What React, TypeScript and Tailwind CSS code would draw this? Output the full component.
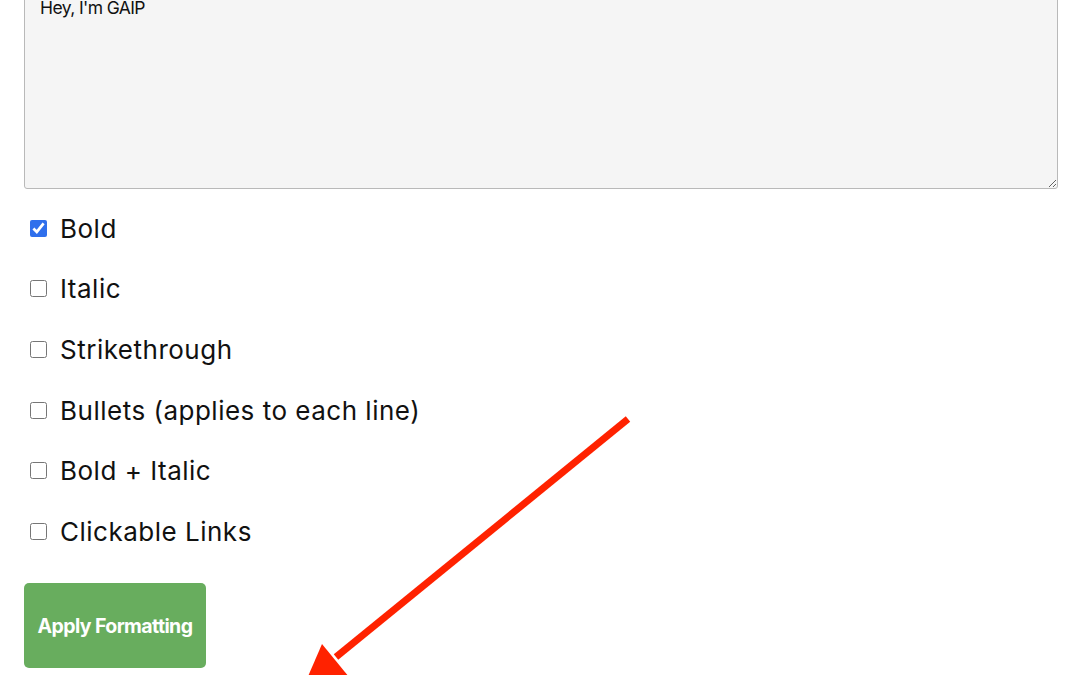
import React, { useState } from "react";

const options = [
  "Bold",
  "Italic",
  "Strikethrough",
  "Bullets (applies to each line)",
  "Bold + Italic",
  "Clickable Links",
];

export default function App() {
  const [checked, setChecked] = useState<boolean[]>([true, false, false, false, false, false]);
  return (
    <div className="relative w-[1080px] h-[675px] overflow-hidden bg-white">
      <div className="ml-[24px] mr-[22px] flex flex-col">
        <textarea
          defaultValue="Hey, I'm GAIP"
          className="mt-[-16px] h-[205px] w-full rounded-[3px] border border-[#b9b9b9] bg-[#f5f5f5] px-[15px] pt-[10px] pb-[14px] text-[17.5px] tracking-[-0.6px] text-[#111] outline-none resize-y"
          style={{ fontFamily: "Inter, 'Noto Sans', sans-serif" }}
        />
        <div className="mt-[9px] flex flex-col">
          {options.map((o, i) => (
            <label
              key={o}
              className="flex h-[60.6px] items-center gap-[13px] text-[26px] tracking-[0.5px] text-[#111]"
              style={{ fontFamily: "Inter, 'Noto Sans', sans-serif" }}
            >
              <input
                type="checkbox"
                checked={checked[i]}
                onChange={() => setChecked(checked.map((c, j) => (j === i ? !c : c)))}
                className="ml-[6px] h-[17px] w-[17px] accent-[#2f6fec]"
              />
              <span>{o}</span>
            </label>
          ))}
        </div>
        <button
          className="mt-[21px] flex h-[85px] w-[182px] items-center justify-center rounded-[5px] bg-[#68ad5e] pt-[3px] text-[19.5px] font-bold tracking-[-0.6px] text-white"
          style={{ fontFamily: "Inter, 'Noto Sans', sans-serif" }}
        >
          Apply Formatting
        </button>
      </div>
      <svg
        className="pointer-events-none absolute left-0 top-0"
        width="1080"
        height="675"
        viewBox="0 0 1080 675"
      >
        <line x1="628" y1="419" x2="336" y2="657" stroke="#ff2200" strokeWidth="7" />
        <polygon points="322,644 349,677 303,688" fill="#ff2200" />
      </svg>
    </div>
  );
}
